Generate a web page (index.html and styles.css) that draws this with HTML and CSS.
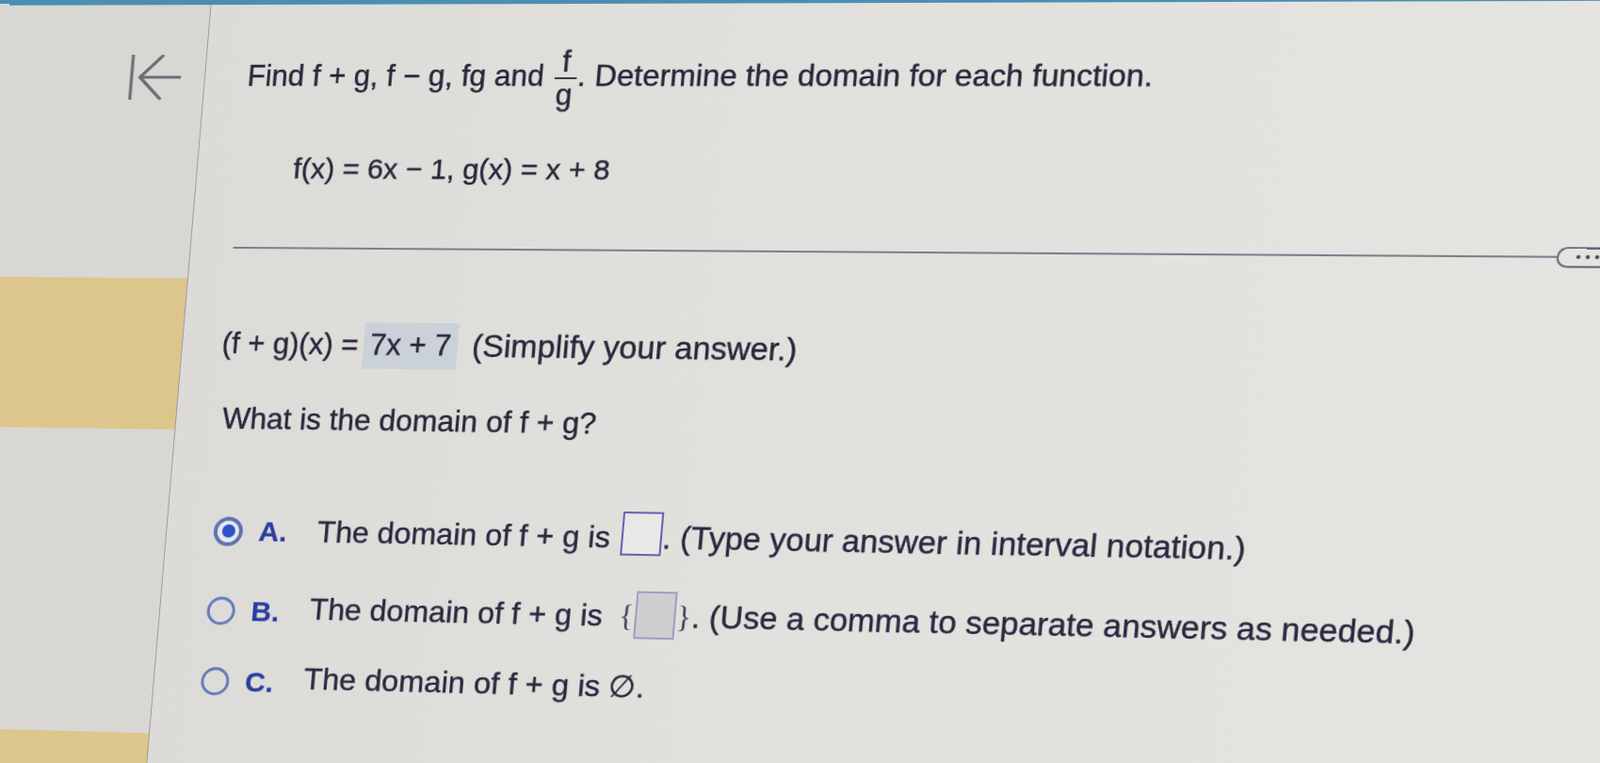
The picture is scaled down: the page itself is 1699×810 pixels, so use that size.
FILE: index.html
```html
<!DOCTYPE html>
<html lang="en">
<head>
<meta charset="utf-8">
<title>Find f + g, f − g, fg and f/g</title>
<link rel="stylesheet" href="styles.css">
</head>
<body>
<div class="screen">
  <div class="topline"></div>
  <div class="layout">
    <aside class="sidebar">
      <div class="nav-top">
        <svg class="back-icon" width="56" height="48" viewBox="0 0 56 48" aria-label="Back">
          <line x1="3" y1="1" x2="3" y2="47" />
          <line x1="12" y1="24" x2="55" y2="24" />
          <polyline points="35,1 12,24 35,47" />
        </svg>
      </div>
      <div class="nav-item flag"></div>
      <div class="nav-item plain"></div>
      <div class="nav-item flag rest"></div>
    </aside>
    <main class="main">
      <div class="prompt">
        <div class="line">Find f + g, f − g, fg and <span class="frac"><span class="num">f</span><span class="den">g</span></span><span class="wide">. Determine the domain for each function.</span></div>
      </div>
      <div class="given">f(x) = 6x − 1, g(x) = x + 8</div>
      <div class="rule-row">
        <div class="rule"></div>
        <div class="pill"><span class="dot"></span><span class="dot"></span><span class="dot"></span></div>
      </div>
      <div class="result">
        <span>(f + g)(x) =</span>
        <span class="filled">7x + 7</span>
        <span class="hint">(Simplify your answer.)</span>
      </div>
      <div class="ask">What is the domain of f + g?</div>
      <ul class="options">
        <li class="option opt-a">
          <span class="radio on"></span>
          <span class="letter">A.</span>
          <span class="text">The domain of f + g is <span class="box box-a"></span><span class="hint">. (Type your answer in interval notation.)</span></span>
        </li>
        <li class="option opt-b">
          <span class="radio"></span>
          <span class="letter">B.</span>
          <span class="text">The domain of f + g is <span class="brace open">{</span><span class="box box-b"></span><span class="brace">}</span><span class="hint">. (Use a comma to separate answers as needed.)</span></span>
        </li>
        <li class="option opt-c">
          <span class="radio"></span>
          <span class="letter">C.</span>
          <span class="text">The domain of f + g is ∅.</span>
        </li>
      </ul>
    </main>
  </div>
</div>
</body>
</html>
```
FILE: styles.css
```css
html, body {
  margin: 0;
  padding: 0;
  height: 100%;
  overflow: hidden;
}

html {
  background: linear-gradient(#4a8fb2 0 4px, #d9d7d3 4px);
}

body {
  background: transparent;
}

.screen {
  width: 1699px;
  height: 880px;
  transform-origin: 260px 80px;
  transform: perspective(2000px) rotateY(-4.36deg) skewX(-4.86deg);
  background: linear-gradient(90deg, #dbd9d5 0%, #e2e0dc 45%, #e6e4e0 100%);
  font-family: "Liberation Sans", Arial, "DejaVu Sans", sans-serif;
  color: #27263a;
  -webkit-text-stroke: 0.4px #27263a;
}

.topline {
  height: 5px;
  background: #4a8fb2;
}

.layout {
  display: grid;
  grid-template-columns: 218px 1fr;
  height: 875px;
}

.sidebar {
  display: flex;
  flex-direction: column;
  background: #d9d7d3;
  border-right: 1.5px solid #9d9ca2;
  box-sizing: border-box;
}

.nav-top {
  height: 291px;
  flex: none;
  padding: 53px 0 0 136px;
  box-sizing: border-box;
}

.back-icon line,
.back-icon polyline {
  fill: none;
  stroke: #6e6d76;
  stroke-width: 3.2;
  stroke-linecap: round;
  stroke-linejoin: round;
}

.nav-item {
  flex: none;
  height: 161px;
}

.nav-item.plain {
  height: 324px;
}

.nav-item.flag {
  background: #dcc68c;
}

.nav-item.rest {
  flex: 1;
}

.main {
  display: flex;
  flex-direction: column;
  padding: 43px 37px 0 45px;
  font-size: 31px;
  white-space: nowrap;
}

.prompt {
  height: 70px;
  display: flex;
  align-items: center;
}

.prompt .line {
  line-height: 36px;
}

.prompt .wide {
  font-size: 31.8px;
}

.frac {
  display: inline-flex;
  flex-direction: column;
  align-items: center;
  vertical-align: middle;
  line-height: 33px;
  margin: 0 1px 0 2px;
}

.frac .num {
  padding: 0 3px;
}

.frac .den {
  border-top: 2px solid #3a3944;
  padding: 0 3px;
}

.given {
  margin: 41px 0 0 57px;
  height: 40px;
  display: flex;
  align-items: center;
  font-size: 30.3px;
}

.rule-row {
  margin: 54px 0 0 0;
  height: 20px;
  display: flex;
  align-items: center;
}

.rule {
  flex: 1;
  height: 2px;
  background: #7f7e8d;
}

.pill {
  flex: none;
  width: 60px;
  height: 21px;
  border: 2px solid #67667b;
  border-radius: 11px;
  box-sizing: border-box;
  display: flex;
  align-items: center;
  justify-content: center;
  gap: 5px;
}

.pill .dot {
  width: 4px;
  height: 4px;
  border-radius: 50%;
  background: #4b4a60;
}

.result {
  margin: 67px 0 0 -3px;
  height: 50px;
  display: flex;
  align-items: center;
}

.filled {
  margin-left: 5px;
  height: 49px;
  padding: 0 7px;
  display: flex;
  align-items: center;
  background: #cbd1d9;
}

.result .hint {
  margin-left: 15px;
  font-size: 33.2px;
}

.ask {
  margin: 34px 0 0 4px;
  height: 40px;
  display: flex;
  align-items: center;
  font-size: 31.5px;
}

.options {
  list-style: none;
  margin: 75px 0 0 0;
  padding: 0;
  display: flex;
  flex-direction: column;
  color: #2a2740;
}

.option {
  height: 50px;
  display: flex;
  align-items: center;
}

.opt-b {
  margin-top: 35px;
}

.opt-c {
  margin-top: 25px;
}

.radio {
  flex: none;
  width: 30px;
  height: 30px;
  margin: 0 17px 0 5px;
  border: 3px solid #6379be;
  border-radius: 50%;
  box-sizing: border-box;
  -webkit-text-stroke: 0;
}

.radio.on {
  width: 31px;
  height: 31px;
  border: 4px solid #5d71b2;
  display: flex;
  align-items: center;
  justify-content: center;
  background: #e9e8ea;
}

.radio.on::after {
  content: "";
  width: 14px;
  height: 14px;
  border-radius: 50%;
  background: #2c52c6;
}

.letter {
  flex: none;
  width: 62px;
  font-weight: bold;
  font-size: 30px;
  color: #2b3ea0;
  -webkit-text-stroke: 0.2px #2b3ea0;
}

.text {
  white-space: nowrap;
  font-size: 31.8px;
  margin-bottom: 10px;
  -webkit-text-stroke: 0.4px #2a2740;
}

.opt-c .text {
  font-size: 32.2px;
}

.option .hint {
  font-size: 33px;
}

.box {
  display: inline-block;
  box-sizing: border-box;
}

.box-a {
  width: 42px;
  height: 46px;
  margin: 0 1px 0 2px;
  vertical-align: -8px;
  border: 2px solid #6a60b4;
  background: #e9e8e6;
}

.box-b {
  width: 42px;
  height: 50px;
  margin: 0 1px;
  vertical-align: -13px;
  border: 2px solid #9aa0c4;
  background: #cfcfd1;
}

.brace {
  font-family: "Liberation Serif", "Times New Roman", serif;
  font-size: 32px;
  color: #453f5c;
  -webkit-text-stroke: 0;
}

.brace.open {
  margin-left: 8px;
}
```
